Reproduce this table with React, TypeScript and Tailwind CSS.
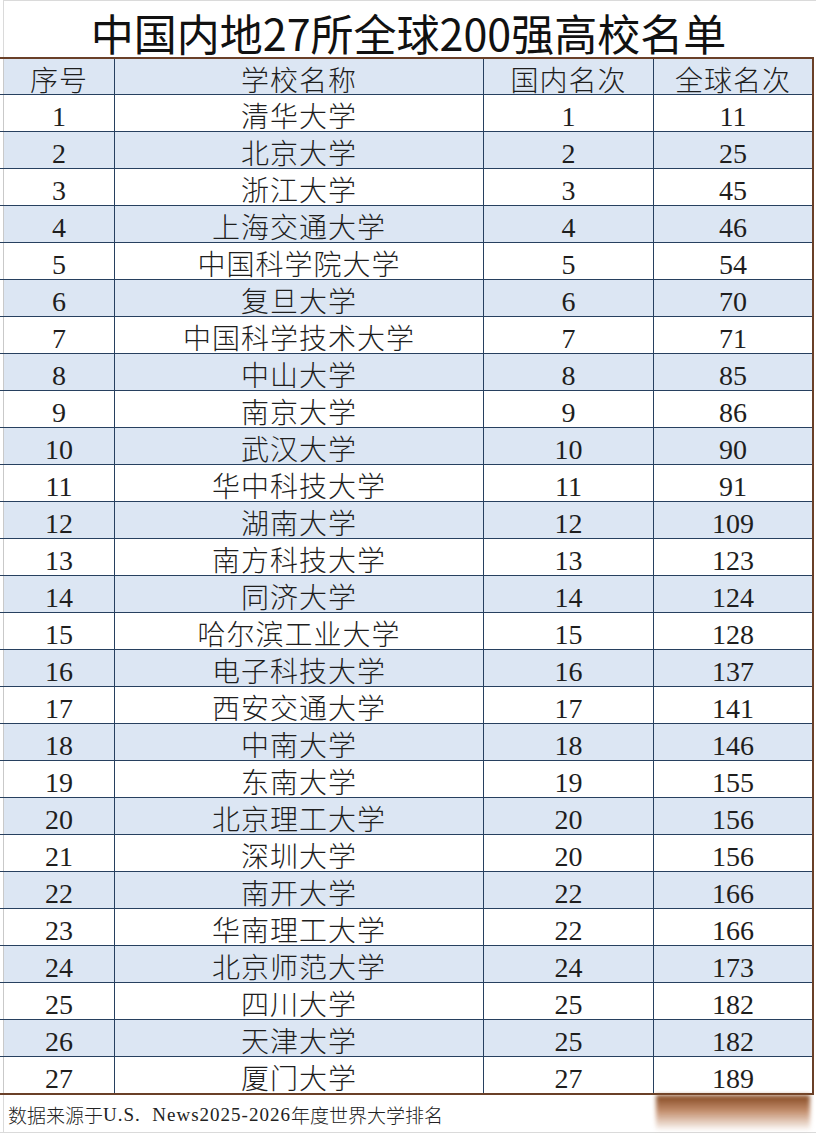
const rows: [number, string, number, number][] = [
  [1, "清华大学", 1, 11],
  [2, "北京大学", 2, 25],
  [3, "浙江大学", 3, 45],
  [4, "上海交通大学", 4, 46],
  [5, "中国科学院大学", 5, 54],
  [6, "复旦大学", 6, 70],
  [7, "中国科学技术大学", 7, 71],
  [8, "中山大学", 8, 85],
  [9, "南京大学", 9, 86],
  [10, "武汉大学", 10, 90],
  [11, "华中科技大学", 11, 91],
  [12, "湖南大学", 12, 109],
  [13, "南方科技大学", 13, 123],
  [14, "同济大学", 14, 124],
  [15, "哈尔滨工业大学", 15, 128],
  [16, "电子科技大学", 16, 137],
  [17, "西安交通大学", 17, 141],
  [18, "中南大学", 18, 146],
  [19, "东南大学", 19, 155],
  [20, "北京理工大学", 20, 156],
  [21, "深圳大学", 20, 156],
  [22, "南开大学", 22, 166],
  [23, "华南理工大学", 22, 166],
  [24, "北京师范大学", 24, 173],
  [25, "四川大学", 25, 182],
  [26, "天津大学", 25, 182],
  [27, "厦门大学", 27, 189],
];

const cjk = "font-['Noto_Sans_CJK_SC',sans-serif] font-light text-[28px] leading-[28px] tracking-[1px] pt-[6px]";
const num = "font-['Liberation_Serif',serif] text-[28px] leading-[28px] pt-[8px]";

function Cell({ text, kind, last }: { text: string | number; kind: "cjk" | "num"; last?: boolean }) {
  return (
    <div
      className={`flex justify-center text-[#1e1e1e] ${last ? "" : "border-r border-[#27405f]"} ${
        kind === "cjk" ? cjk : num
      }`}
    >
      {text}
    </div>
  );
}

export default function App() {
  return (
    <div className="w-[816px] h-[1137px] bg-white overflow-hidden">
      {/* title row */}
      <div className="h-[57px] border-t border-[#dadada] ml-[3px] border-l flex items-center justify-center">
        <h1 className="font-['Noto_Sans_CJK_SC',sans-serif] font-normal text-[43px] leading-[43px] text-[#111] pt-[6px] -ml-[3px]">
          中国内地27所全球200强高校名单
        </h1>
      </div>

      {/* table */}
      <div className="w-[814px] border-t-2 border-r-2 border-b-2 border-[#6a4028]">
        <div className="grid grid-cols-[4px_111px_369px_170px_158px] h-[36px] bg-[#dce6f3] border-b border-[#27405f]">
          <div className="border-r border-[#c9c9c9] bg-white" />
          <Cell text="序号" kind="cjk" />
          <Cell text="学校名称" kind="cjk" />
          <Cell text="国内名次" kind="cjk" />
          <Cell text="全球名次" kind="cjk" last />
        </div>
        {rows.map(([no, name, cn, world], i) => (
          <div
            key={no}
            className={`grid grid-cols-[4px_111px_369px_170px_158px] ${
              i === rows.length - 1 ? "h-[36px]" : "h-[37px] border-b border-[#27405f]"
            } ${no % 2 === 0 ? "bg-[#dce6f3]" : "bg-white"}`}
          >
            <div className="border-r border-[#c9c9c9] bg-white" />
            <Cell text={no} kind="num" />
            <Cell text={name} kind="cjk" />
            <Cell text={cn} kind="num" />
            <Cell text={world} kind="num" last />
          </div>
        ))}
      </div>

      {/* footer */}
      <div className="flex h-[38px] border-b border-[#dadada]">
        <div className="w-[4px] border-r border-[#dadada]" />
        <div className="w-[648px] flex items-center pl-[4px] pt-[3px] text-[19px] text-[#222] font-['Noto_Sans_CJK_SC',sans-serif] font-light">
          数据来源于<span className="font-['Liberation_Serif',serif] tracking-[1px]">U.S.&nbsp;&nbsp;News2025-2026</span>年度世界大学排名
        </div>
        <div className="w-[162px] h-[36px] px-[4px]">
          <div className="h-full bg-linear-to-b from-[#8a4f28] from-5% via-[#c4906f] via-45% to-white/0 blur-[2px]" />
        </div>
      </div>
    </div>
  );
}
